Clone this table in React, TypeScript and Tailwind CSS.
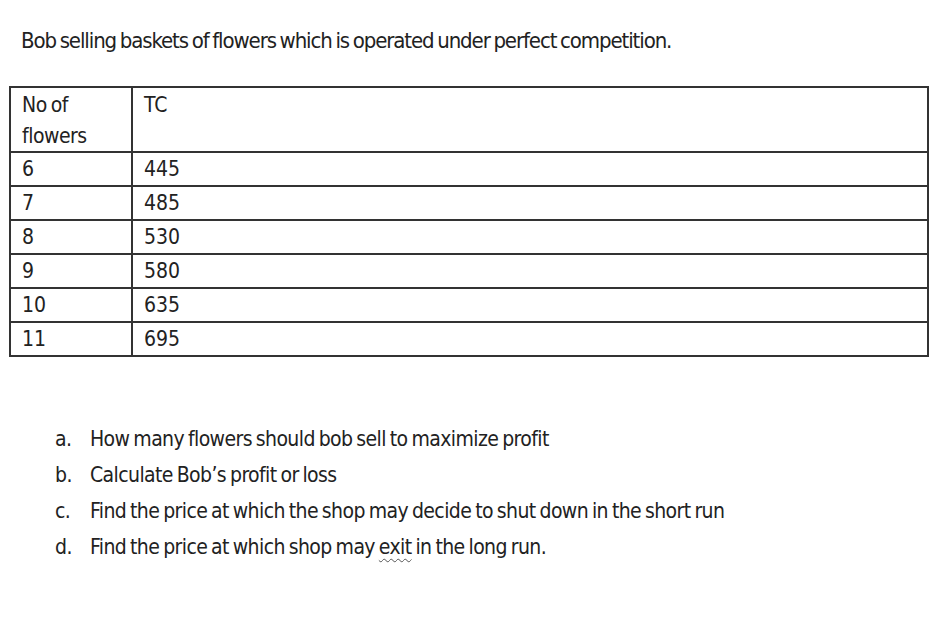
import React from "react";

const font = { fontFamily: '"Liberation Sans Narrow", "DejaVu Sans Condensed", "Liberation Sans", sans-serif' };

const rows = [
  ["6", "445"],
  ["7", "485"],
  ["8", "530"],
  ["9", "580"],
  ["10", "635"],
  ["11", "695"],
];

const items = [
  ["a.", "How many flowers should bob sell to maximize profit"],
  ["b.", "Calculate Bob’s profit or loss"],
  ["c.", "Find the price at which the shop may decide to shut down in the short run"],
];

export default function App() {
  return (
    <div className="w-[945px] h-[623px] bg-white text-[#222] overflow-hidden" style={font}>
      <div className="pt-[26px] pl-[21px] text-[22px] leading-[30px] tracking-[-1.1px] [word-spacing:-1.5px]">
        Bob selling baskets of flowers which is operated under perfect competition.
      </div>
      <div className="pl-[9px] pt-[30px] w-[929px]">
        <div className="border-2 border-[#333]">
          <div className="flex h-[65px] border-b-2 border-[#333]">
            <div className="w-[122px] border-r-2 border-[#333] pl-[11px] pt-[2px] text-[21px] leading-[31px] tracking-[-0.5px] [word-spacing:-1.5px]">
              No of
              <br />
              flowers
            </div>
            <div className="flex-1 pl-[11px] pt-[2px] text-[21px] leading-[31px]">TC</div>
          </div>
          {rows.map((r, i) => (
            <div
              key={r[0]}
              className={
                i < rows.length - 1
                  ? "flex h-[34px] border-b-2 border-[#333]"
                  : "flex h-[32px]"
              }
            >
              <div className="w-[122px] border-r-2 border-[#333] pl-[11px] text-[21px] leading-[32px]">
                {r[0]}
              </div>
              <div className="flex-1 pl-[11px] text-[21px] leading-[32px]">{r[1]}</div>
            </div>
          ))}
        </div>
      </div>
      <div className="pt-[64px] pl-[55px] flex flex-col text-[21px] leading-[36px] tracking-[-0.6px] [word-spacing:-1.5px]">
        {items.map((it) => (
          <div key={it[0]} className="flex">
            <span className="w-[35px]">{it[0]}</span>
            <span>{it[1]}</span>
          </div>
        ))}
        <div className="flex">
          <span className="w-[35px]">d.</span>
          <span>
            Find the price at which shop may{" "}
            <span className="underline decoration-wavy decoration-[#555] decoration-1 underline-offset-[4px]">exit</span>{" "}
            in the long run.
          </span>
        </div>
      </div>
    </div>
  );
}
